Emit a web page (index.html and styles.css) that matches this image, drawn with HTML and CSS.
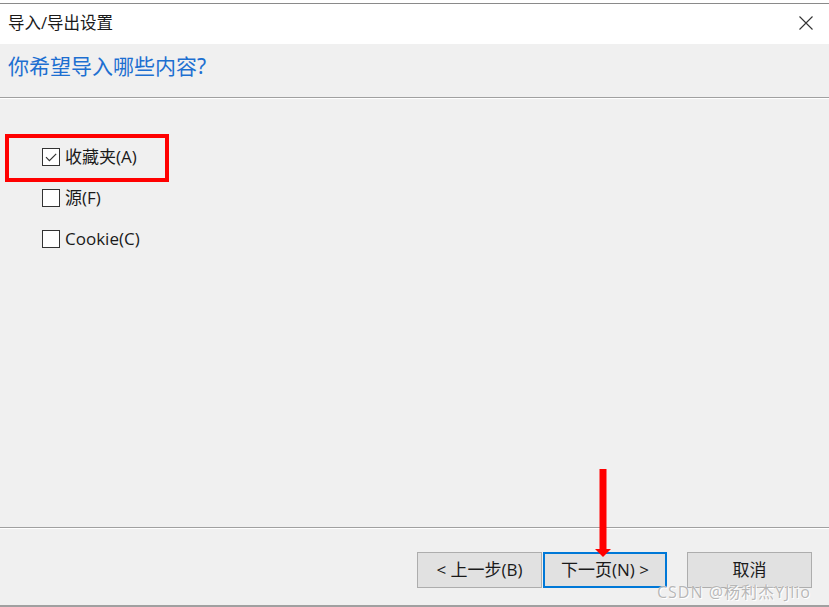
FILE: index.html
```html
<!DOCTYPE html>
<html lang="zh-CN">
<head>
<meta charset="utf-8">
<title>导入/导出设置</title>
<link rel="stylesheet" href="styles.css">
</head>
<body>
<div class="window">
  <div class="titlebar">
    <span class="title">导入/导出设置</span>
    <svg class="close" width="16" height="16" viewBox="0 0 16 16" aria-hidden="true">
      <path d="M1.5 1.5 L14.5 14.5 M14.5 1.5 L1.5 14.5" stroke="#333" stroke-width="1.1" fill="none"/>
    </svg>
  </div>
  <div class="header">
    <h1 class="instruction">你希望导入哪些内容?</h1>
  </div>
  <div class="content">
    <label class="option">
      <span class="box checked">
        <svg width="16" height="16" viewBox="0 0 16 16" aria-hidden="true"><path d="M3 8.2 L6.4 11.6 L13.2 4.8" stroke="#333" stroke-width="1.2" fill="none"/></svg>
      </span>
      <span class="label">收藏夹(A)</span>
    </label>
    <label class="option">
      <span class="box"></span>
      <span class="label">源(F)</span>
    </label>
    <label class="option">
      <span class="box"></span>
      <span class="label">Cookie(C)</span>
    </label>
    <div class="highlight"></div>
  </div>
  <div class="footer">
    <div class="btn-pair">
      <button class="btn">&lt; 上一步(B)</button>
      <button class="btn default">下一页(N) &gt;</button>
    </div>
    <button class="btn">取消</button>
    <div class="arrow">
      <svg width="16" height="90" viewBox="0 0 16 90" aria-hidden="true">
        <rect x="4.5" y="0" width="7" height="81" fill="#ff0000"/>
        <polygon points="0,80 16,80 8,88" fill="#ff0000"/>
      </svg>
    </div>
    <div class="watermark">CSDN @杨利杰YJlio</div>
  </div>
</div>
</body>
</html>
```

FILE: styles.css
```css
* { box-sizing: border-box; }

html, body {
  margin: 0;
  padding: 0;
  background: #ffffff;
}

body {
  width: 829px;
  height: 607px;
  overflow: hidden;
  padding-top: 3px;
  font-family: "Open Sans", "Noto Sans CJK SC", sans-serif;
  color: #1a1a1a;
}

.window {
  position: relative;
  border-top: 1px solid #8a8a8a;
  height: 604px;
  display: flex;
  flex-direction: column;
}

.titlebar {
  height: 40px;
  flex: 0 0 40px;
  background: #ffffff;
  display: flex;
  align-items: center;
  justify-content: space-between;
  padding: 0 15px 2px 8px;
}

.title {
  font-size: 16.5px;
  line-height: 20px;
  color: #1a1a1a;
}

.close { display: block; margin-top: 0; }

.header {
  flex: 0 0 54px;
  background: #f0f0f0;
  border-bottom: 1px solid #a0a0a0;
  padding: 7px 0 0 8px;
}

.instruction {
  margin: 0;
  font-family: "Noto Sans", "Noto Sans CJK SC", sans-serif;
  font-size: 21px;
  line-height: 30px;
  font-weight: normal;
  color: #1d6fd1;
}

.content {
  position: relative;
  flex: 0 0 430px;
  background: #f0f0f0;
  border-top: 1px solid #ffffff;
  border-bottom: 1px solid #a0a0a0;
  padding: 49px 0 0 42px;
  display: flex;
  flex-direction: column;
  gap: 23px;
}

.option {
  display: flex;
  align-items: center;
  gap: 5px;
  height: 18px;
}

.box {
  width: 18px;
  height: 18px;
  border: 1px solid #333333;
  background: #ffffff;
  display: flex;
  align-items: center;
  justify-content: center;
}

.box svg { display: block; }

.label {
  font-size: 17px;
  line-height: 18px;
  color: #1a1a1a;
}

.highlight {
  position: absolute;
  left: 5px;
  top: 35px;
  width: 164px;
  height: 48px;
  border: 4px solid #ff0000;
}

.footer {
  position: relative;
  flex: 1 1 auto;
  background: #f0f0f0;
  border-top: 1px solid #ffffff;
  border-bottom: 2px solid #a0a0a0;
  display: flex;
  justify-content: flex-end;
  align-items: flex-start;
  padding: 23px 17px 0 0;
  gap: 20px;
}

.btn-pair {
  display: flex;
  gap: 1px;
}

.btn {
  width: 125px;
  height: 36px;
  background: #e1e1e1;
  border: 1px solid #adadad;
  border-radius: 0;
  font-family: "Open Sans", "Noto Sans CJK SC", sans-serif;
  font-size: 17px;
  color: #1a1a1a;
  padding: 0 0 3px 0;
  margin: 0;
}

.btn.default {
  width: 124px;
  border: 2px solid #0078d7;
}

.arrow {
  position: absolute;
  left: 595px;
  top: -60px;
  line-height: 0;
}

.watermark {
  position: absolute;
  left: 657px;
  top: 53px;
  font-size: 16px;
  line-height: 20px;
  color: rgba(170, 170, 170, 0.85);
  text-shadow: 0 0 1px #ffffff, 1px 1px 0 #ffffff;
  letter-spacing: 1px;
}
```
